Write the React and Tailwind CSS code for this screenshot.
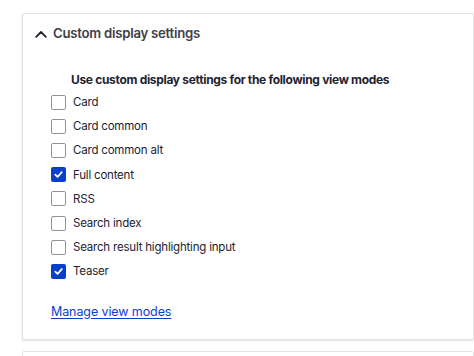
import React from "react";

const items = [
  ["Card", false],
  ["Card common", false],
  ["Card common alt", false],
  ["Full content", true],
  ["RSS", false],
  ["Search index", false],
  ["Search result highlighting input", false],
  ["Teaser", true],
];

function Box({ checked }) {
  if (checked) {
    return (
      <span className="flex h-[15px] w-[15px] items-center justify-center rounded-[2px] bg-[#0a3fcc]">
        <svg width="11" height="11" viewBox="0 0 12 12" fill="none">
          <path d="M2.5 6.2 L5 8.6 L9.6 3.4" stroke="white" strokeWidth="1.9" strokeLinecap="round" strokeLinejoin="round" />
        </svg>
      </span>
    );
  }
  return <span className="block h-[15px] w-[15px] rounded-[2px] border border-[#8e929c] bg-white" />;
}

export default function App() {
  return (
    <div className="h-[356px] w-[474px] overflow-hidden bg-white font-['Inter',sans-serif] text-[#222330]">
      <div className="ml-[22px] mt-[13px] w-[452px] rounded-[2px] border border-[#e2e2e6] bg-white shadow-[0_1px_2px_rgba(0,0,0,0.12)]">
        <div className="flex h-[39px] items-center pl-[12px] pt-[1px]">
          <svg width="12" height="8" viewBox="0 0 12 8" fill="none" className="mr-[6px]">
            <path d="M1.2 6.8 L6 2 L10.8 6.8" stroke="#222330" strokeWidth="1.8" strokeLinecap="round" strokeLinejoin="round" />
          </svg>
          <span className="text-[13.2px] font-semibold tracking-[-0.25px] text-[#3f404a]">Custom display settings</span>
        </div>
        <div className="pl-[28px] pt-[19px]">
          <div className="pl-[20px] text-[12px] font-bold leading-[16px] tracking-[-0.32px] text-[#222330]">
            Use custom display settings for the following view modes
          </div>
          <div className="mt-[2px] flex flex-col">
            {items.map(([label, checked]) => (
              <label key={label} className="flex h-[24.2px] items-center">
                <Box checked={checked} />
                <span className="ml-[7px] text-[11.5px] leading-[16px] tracking-[-0.2px] text-[#222330]">{label}</span>
              </label>
            ))}
          </div>
          <div className="pb-[17px] pt-[14px]">
            <a href="#" className="text-[12.5px] tracking-[-0.1px] text-[#0a3fcc] underline underline-offset-[2px]">
              Manage view modes
            </a>
          </div>
        </div>
      </div>
      <div className="ml-[22px] mt-[11px] h-[20px] w-[452px] rounded-[2px] border border-[#e2e2e6] bg-white" />
    </div>
  );
}
